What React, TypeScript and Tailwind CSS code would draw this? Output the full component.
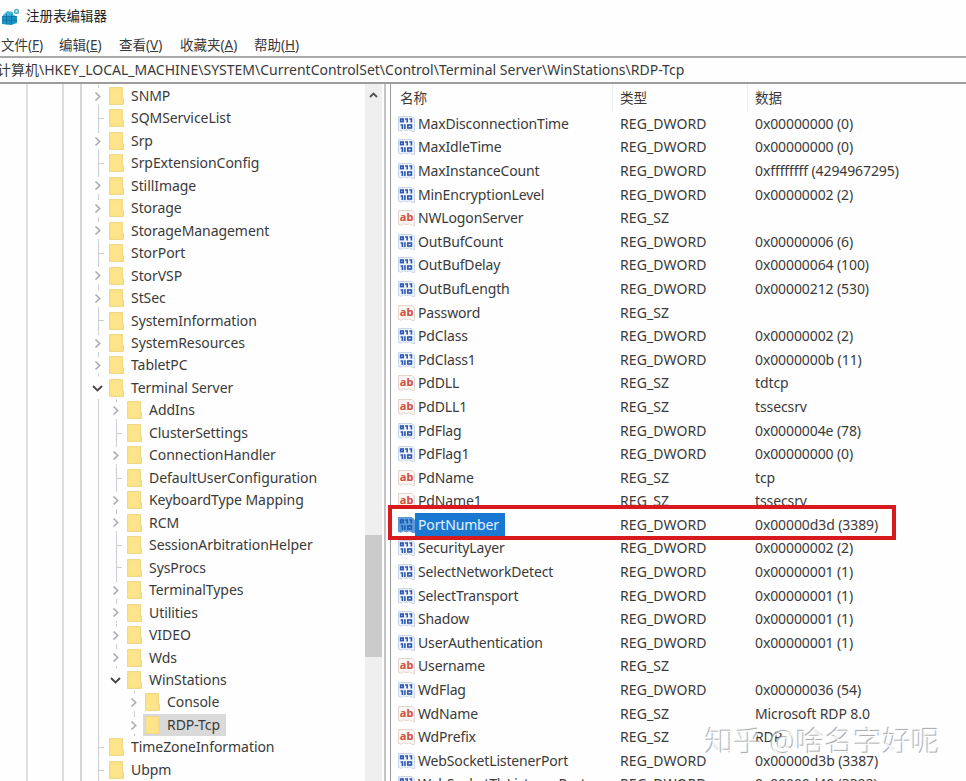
import clsx from 'clsx'

type Branch = 'closed' | 'open' | 'leaf'

interface TreeNode {
  label: string
  depth: 0 | 1 | 2
  branch: Branch
  selected?: boolean
}

interface RegistryValue {
  name: string
  type: 'REG_DWORD' | 'REG_SZ'
  data: string
  selected?: boolean
}

const MENU = [
  { label: '文件', hotkey: 'F', width: 'w-[58px]' },
  { label: '编辑', hotkey: 'E', width: 'w-[60px]' },
  { label: '查看', hotkey: 'V', width: 'w-[61px]' },
  { label: '收藏夹', hotkey: 'A', width: 'w-[74px]' },
  { label: '帮助', hotkey: 'H', width: 'w-[60px]' },
]

const TREE: TreeNode[] = [
  { label: 'SNMP', depth: 0, branch: 'closed' },
  { label: 'SQMServiceList', depth: 0, branch: 'leaf' },
  { label: 'Srp', depth: 0, branch: 'closed' },
  { label: 'SrpExtensionConfig', depth: 0, branch: 'leaf' },
  { label: 'StillImage', depth: 0, branch: 'closed' },
  { label: 'Storage', depth: 0, branch: 'closed' },
  { label: 'StorageManagement', depth: 0, branch: 'closed' },
  { label: 'StorPort', depth: 0, branch: 'leaf' },
  { label: 'StorVSP', depth: 0, branch: 'closed' },
  { label: 'StSec', depth: 0, branch: 'closed' },
  { label: 'SystemInformation', depth: 0, branch: 'leaf' },
  { label: 'SystemResources', depth: 0, branch: 'closed' },
  { label: 'TabletPC', depth: 0, branch: 'closed' },
  { label: 'Terminal Server', depth: 0, branch: 'open' },
  { label: 'AddIns', depth: 1, branch: 'closed' },
  { label: 'ClusterSettings', depth: 1, branch: 'leaf' },
  { label: 'ConnectionHandler', depth: 1, branch: 'closed' },
  { label: 'DefaultUserConfiguration', depth: 1, branch: 'leaf' },
  { label: 'KeyboardType Mapping', depth: 1, branch: 'closed' },
  { label: 'RCM', depth: 1, branch: 'closed' },
  { label: 'SessionArbitrationHelper', depth: 1, branch: 'leaf' },
  { label: 'SysProcs', depth: 1, branch: 'leaf' },
  { label: 'TerminalTypes', depth: 1, branch: 'closed' },
  { label: 'Utilities', depth: 1, branch: 'closed' },
  { label: 'VIDEO', depth: 1, branch: 'closed' },
  { label: 'Wds', depth: 1, branch: 'closed' },
  { label: 'WinStations', depth: 1, branch: 'open' },
  { label: 'Console', depth: 2, branch: 'closed' },
  { label: 'RDP-Tcp', depth: 2, branch: 'closed', selected: true },
  { label: 'TimeZoneInformation', depth: 0, branch: 'leaf' },
  { label: 'Ubpm', depth: 0, branch: 'leaf' },
]

const VALUES: RegistryValue[] = [
  { name: 'MaxDisconnectionTime', type: 'REG_DWORD', data: '0x00000000 (0)' },
  { name: 'MaxIdleTime', type: 'REG_DWORD', data: '0x00000000 (0)' },
  { name: 'MaxInstanceCount', type: 'REG_DWORD', data: '0xffffffff (4294967295)' },
  { name: 'MinEncryptionLevel', type: 'REG_DWORD', data: '0x00000002 (2)' },
  { name: 'NWLogonServer', type: 'REG_SZ', data: '' },
  { name: 'OutBufCount', type: 'REG_DWORD', data: '0x00000006 (6)' },
  { name: 'OutBufDelay', type: 'REG_DWORD', data: '0x00000064 (100)' },
  { name: 'OutBufLength', type: 'REG_DWORD', data: '0x00000212 (530)' },
  { name: 'Password', type: 'REG_SZ', data: '' },
  { name: 'PdClass', type: 'REG_DWORD', data: '0x00000002 (2)' },
  { name: 'PdClass1', type: 'REG_DWORD', data: '0x0000000b (11)' },
  { name: 'PdDLL', type: 'REG_SZ', data: 'tdtcp' },
  { name: 'PdDLL1', type: 'REG_SZ', data: 'tssecsrv' },
  { name: 'PdFlag', type: 'REG_DWORD', data: '0x0000004e (78)' },
  { name: 'PdFlag1', type: 'REG_DWORD', data: '0x00000000 (0)' },
  { name: 'PdName', type: 'REG_SZ', data: 'tcp' },
  { name: 'PdName1', type: 'REG_SZ', data: 'tssecsrv' },
  { name: 'PortNumber', type: 'REG_DWORD', data: '0x00000d3d (3389)', selected: true },
  { name: 'SecurityLayer', type: 'REG_DWORD', data: '0x00000002 (2)' },
  { name: 'SelectNetworkDetect', type: 'REG_DWORD', data: '0x00000001 (1)' },
  { name: 'SelectTransport', type: 'REG_DWORD', data: '0x00000001 (1)' },
  { name: 'Shadow', type: 'REG_DWORD', data: '0x00000001 (1)' },
  { name: 'UserAuthentication', type: 'REG_DWORD', data: '0x00000001 (1)' },
  { name: 'Username', type: 'REG_SZ', data: '' },
  { name: 'WdFlag', type: 'REG_DWORD', data: '0x00000036 (54)' },
  { name: 'WdName', type: 'REG_SZ', data: 'Microsoft RDP 8.0' },
  { name: 'WdPrefix', type: 'REG_SZ', data: 'RDP' },
  { name: 'WebSocketListenerPort', type: 'REG_DWORD', data: '0x00000d3b (3387)' },
  { name: 'WebSocketTlsListenerPort', type: 'REG_DWORD', data: '0x00000d40 (3392)' },
]

function AppIcon() {
  return (
    <svg width="19" height="18" viewBox="0 0 19 18" className="shrink-0">
      <path d="M1 8.5 L6 3.5 L12 4 V7 L16 8.5 V15 L10 17 L1 16 Z" fill="#1993c4" />
      <path d="M1 8.5 L6 3.5 L12 4 V8 Z" fill="#3fb4dc" />
      <path d="M1 8.5H16 M1 12.3H16 M5.5 6V16.5 M10.5 6V17" stroke="#0d6d9c" strokeWidth="0.7" fill="none" />
      <circle cx="15.5" cy="3.4" r="1.9" fill="#d5eef7" stroke="#55a9c6" strokeWidth="1.4" />
    </svg>
  )
}

function FolderIcon() {
  return (
    <svg width="16" height="18" viewBox="0 0 16 18" className="shrink-0">
      <path d="M0.5 0.5H13.5V11.5H14.5V17.5H0.5Z" fill="#f9df7d" stroke="#f0d88a" strokeWidth="1" />
      <path d="M1.5 1.5H12.5V16.5H1.5Z" fill="#fde48a" />
    </svg>
  )
}

/** The small page icon in front of each value: binary digits or "ab". */
function ValueIcon({ type, selected }: { type: RegistryValue['type']; selected?: boolean }) {
  const binary = type === 'REG_DWORD'
  return (
    <svg width="17" height="18" viewBox="0 0 17 18" className="shrink-0">
      <path
        d="M0.5 1.5H14L16.5 4V16.5H14.5L11.5 14.8L8.5 15.8L5.5 14.8L3 16.2L0.5 15.5Z"
        fill={selected ? '#5d9ede' : binary ? '#edf3fb' : '#fcf6f3'}
        stroke={selected ? '#5590cf' : binary ? '#c3d0e6' : '#ddd0ca'}
        strokeWidth="0.9"
      />
      {binary ? (
        <g fill="none" stroke={selected ? '#1d5cb4' : '#2c56b4'} strokeWidth="1.6">
          <rect x="2.6" y="4" width="2.6" height="2.6" />
          <path d="M7 4H9.2V7.4 M11.4 4H13.4V7.4 M2.6 10H4.4V14" />
          <path d="M6.9 9.2V14" />
          <rect x="9.8" y="10" width="3.6" height="3" />
        </g>
      ) : (
        <text x="1.8" y="12" fontFamily="'Noto Sans', sans-serif" fontSize="11" fontWeight="700" fill="#d0503f">
          ab
        </text>
      )}
    </svg>
  )
}

function Expander({ branch }: { branch: Branch }) {
  if (branch === 'leaf') {
    return (
      <svg width="18" height="22.5" viewBox="0 0 18 22.5" className="shrink-0">
        <path d="M9.5 0V22.5 M10 11.5H15" stroke="#ccccd6" fill="none" />
      </svg>
    )
  }
  return (
    <svg width="18" height="22.5" viewBox="0 0 18 22.5" className="shrink-0" fill="none">
      {branch === 'closed' ? (
        <>
          <path d="M9.5 0V3 M9.5 20V22.5" stroke="#ccccd6" />
          <path d="M6.5 7.5L10.7 11.5L6.5 15.5" stroke="#a9a9b4" strokeWidth="1.6" />
        </>
      ) : (
        <path d="M4 9L8.5 13.5L13 9" stroke="#484848" strokeWidth="1.9" />
      )}
    </svg>
  )
}

function TreeRow({ node }: { node: TreeNode }) {
  return (
    <div className="flex h-[22.48px] shrink-0 items-center">
      {node.depth > 0 && <span className="ml-[9px] mr-2 h-full w-px shrink-0 bg-[#cfcfd6]" />}
      {node.depth > 1 && <span className="w-[18px] shrink-0" />}
      <Expander branch={node.branch} />
      <div className={clsx('flex h-full items-center pr-[6px]', node.selected && 'bg-[#d9d9d9]')}>
        <span className="ml-[2px]">
          <FolderIcon />
        </span>
        <span className="ml-[6px] tracking-[-0.06px]">{node.label}</span>
      </div>
    </div>
  )
}

function TreePane() {
  return (
    <div className="flex w-[386px] shrink-0 overflow-hidden border-r-2 border-[#c4c4c8]">
      {/* Guide lines of the ancestor keys */}
      <div className="flex w-[89px] shrink-0">
        <span className="ml-[26px] w-[2px] bg-[#dfdfdf]" />
        <span className="ml-[34px] w-[2px] bg-[#dcdcdc]" />
        <span className="ml-[16px] w-[2px] bg-[#d6d6d6]" />
      </div>
      <div className="flex min-w-0 flex-1 flex-col pt-[0.6px]">
        {TREE.map((node) => (
          <TreeRow key={node.label} node={node} />
        ))}
      </div>
      <div className="mr-[2px] flex w-[17px] shrink-0 flex-col items-center bg-[#efeff0]">
        <svg width="17" height="22" viewBox="0 0 17 22" fill="none">
          <path d="M5 13L8.5 9.5L12 13" stroke="#505050" strokeWidth="1.8" />
        </svg>
        <div className="mt-[429px] h-[122px] w-full bg-[#cbcbcb]" />
      </div>
    </div>
  )
}

function ValueRow({ value }: { value: RegistryValue }) {
  return (
    <div className="flex h-[23.6px] shrink-0 items-center">
      <div className="flex h-full w-[223px] shrink-0 items-center pl-[7px]">
        <ValueIcon type={value.type} selected={value.selected} />
        <span
          className={clsx(
            'flex h-[23px] items-center pl-[3px] pr-[6px] tracking-[-0.15px]',
            value.selected && 'bg-[#1979d2] text-[#e4f1fd]',
          )}
        >
          {value.name}
        </span>
      </div>
      <span className="w-[135px] shrink-0 pl-[6px] tracking-[0.1px]">{value.type}</span>
      <span className="pl-[6px] tracking-[-0.1px]">{value.data}</span>
    </div>
  )
}

function ValuePane() {
  return (
    <div className="ml-[4px] flex min-w-0 flex-1 flex-col overflow-hidden border-l border-[#96969a]">
      <div className="flex h-[28px] shrink-0 text-[13.6px]">
        <span className="flex w-[222px] items-center border-r border-[#ececec] pl-[9px]">名称</span>
        <span className="flex w-[135px] items-center border-r border-[#ececec] pl-[7px]">类型</span>
        <span className="flex items-center pl-[7px]">数据</span>
      </div>
      {VALUES.map((value) => (
        <ValueRow key={value.name} value={value} />
      ))}
    </div>
  )
}

export default function App() {
  return (
    <div className="relative flex h-[781px] w-[966px] flex-col overflow-hidden whitespace-nowrap bg-[#fefefe] font-['Noto_Sans','Noto_Sans_CJK_SC',sans-serif] text-[14px] leading-none text-[#3a3a3a]">
      <header className="flex h-[34px] shrink-0 items-center pl-[1px]">
        <AppIcon />
        <h1 className="ml-[6px] text-[13.5px] text-[#222]">注册表编辑器</h1>
      </header>

      <nav className="flex h-[22px] shrink-0 items-center pl-[1px] pt-px text-[13.5px]">
        {MENU.map((item) => (
          <span key={item.hotkey} className={clsx('shrink-0', item.width)}>
            {item.label}(<span className="underline">{item.hotkey}</span>)
          </span>
        ))}
      </nav>

      <div className="flex h-[28px] shrink-0 items-center border-b-2 border-t-2 border-b-[#9b9d9b] border-t-[#a9a9a9]">
        <span className="-ml-[3px]">
          计算机\HKEY_LOCAL_MACHINE\SYSTEM\CurrentControlSet\Control\Terminal Server\WinStations\RDP-Tcp
        </span>
      </div>

      <main className="flex min-h-0 flex-1">
        <TreePane />
        <ValuePane />
      </main>

      {/* Callout frame round the PortNumber value */}
      <div className="absolute left-[388px] top-[505px] h-[35px] w-[508px] border-4 border-[#d8191e]" />

      <div className="absolute left-[705px] top-[727px] text-[28.9px] font-light text-white/90 [text-shadow:-1px_-1px_1px_#a0a0a0]">
        知乎 @啥名字好呢
      </div>
    </div>
  )
}
